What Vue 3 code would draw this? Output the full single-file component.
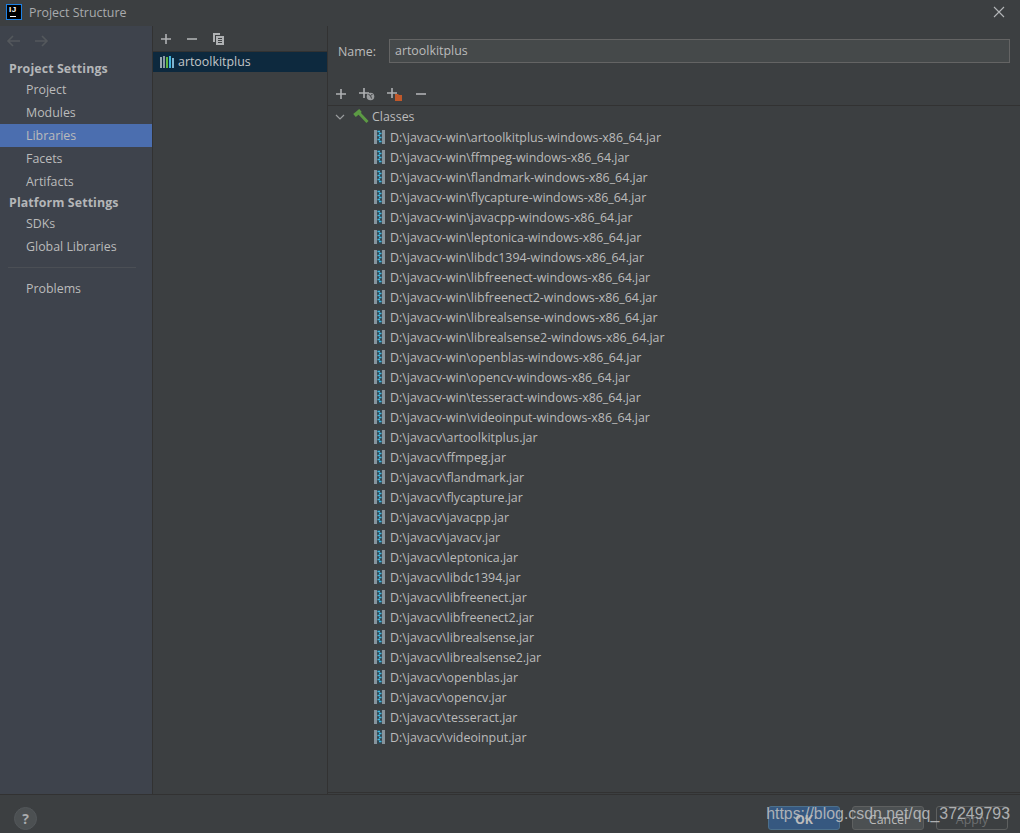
<template>
  <div class="dialog">
    <!-- Title bar -->
    <div class="title-bar">
      <div class="app-logo"><span class="logo-text">IJ</span><span class="logo-line"></span></div>
      <span class="title">Project Structure</span>
      <svg class="close" width="12" height="12" viewBox="0 0 12 12">
        <path d="M1 1l10 10M11 1L1 11" stroke="#b4b6b8" stroke-width="1.1" fill="none" />
      </svg>
    </div>

    <div class="body">
      <!-- Sidebar -->
      <aside class="sidebar">
        <div class="nav-arrows">
          <svg width="16" height="14" viewBox="0 0 16 14">
            <path d="M14 7H2M7 2L2 7l5 5" stroke="#54585c" stroke-width="1.6" fill="none" />
          </svg>
          <svg width="16" height="14" viewBox="0 0 16 14">
            <path d="M2 7h12M9 2l5 5-5 5" stroke="#54585c" stroke-width="1.6" fill="none" />
          </svg>
        </div>
        <div class="nav-head first">Project Settings</div>
        <div v-for="n in projectNav" :key="n" class="nav-item" :class="{ active: n === 'Libraries' }">{{ n }}</div>
        <div class="nav-head second">Platform Settings</div>
        <div v-for="n in platformNav" :key="n" class="nav-item">{{ n }}</div>
        <div class="nav-sep"></div>
        <div class="nav-item">Problems</div>
      </aside>

      <!-- Library list -->
      <section class="lib-panel">
        <div class="lib-toolbar">
          <svg width="12" height="12" viewBox="0 0 12 12"><path d="M6 1v10M1 6h10" stroke="#afb1b3" stroke-width="1.6" /></svg>
          <svg width="12" height="12" viewBox="0 0 12 12"><path d="M1 6h10" stroke="#afb1b3" stroke-width="1.6" /></svg>
          <svg width="13" height="13" viewBox="0 0 13 13">
            <path d="M1 1h7v2H3v7H1z" fill="#afb1b3" />
            <path d="M4 4h8v9H4z" fill="#afb1b3" />
            <path d="M6 6.500h4M6 8.500h4M6 10.500h4" stroke="#3c3f41" stroke-width="1" />
          </svg>
        </div>
        <div class="lib-row">
          <svg width="15" height="12" viewBox="0 0 15 12">
            <rect x="0" y="1" width="2" height="11" fill="#9aa7b0" />
            <rect x="3" y="0" width="2" height="12" fill="#8a9ba6" />
            <rect x="6" y="1" width="2" height="11" fill="#62b543" />
            <rect x="9" y="0" width="2" height="12" fill="#40b6e0" />
            <rect x="12" y="2" width="2" height="10" fill="#7fb4cf" />
          </svg>
          <span>artoolkitplus</span>
        </div>
      </section>

      <!-- Library detail -->
      <section class="detail">
        <div class="name-row">
          <label>Name:</label>
          <div class="name-input">artoolkitplus</div>
        </div>
        <div class="detail-toolbar">
          <svg width="12" height="12" viewBox="0 0 12 12"><path d="M6 1v10M1 6h10" stroke="#afb1b3" stroke-width="1.6" /></svg>
          <svg width="16" height="14" viewBox="0 0 16 14">
            <path d="M5 1v10M0 6h10" stroke="#afb1b3" stroke-width="1.6" />
            <circle cx="11.500" cy="9.500" r="3.800" fill="#9a9c9e" />
            <path d="M9.500 7.500l2 1 1 3M13.500 7.500l-1.500 .5" stroke="#3c3f41" stroke-width="1" fill="none" />
          </svg>
          <svg width="16" height="14" viewBox="0 0 16 14">
            <path d="M5 1v10M0 6h10" stroke="#afb1b3" stroke-width="1.6" />
            <path d="M8 7h3l1 1h3v6H8z" fill="#c0582a" />
          </svg>
          <svg width="12" height="12" viewBox="0 0 12 12"><path d="M1 6h10" stroke="#afb1b3" stroke-width="1.6" /></svg>
        </div>
        <div class="tree">
          <div class="tree-root">
            <svg class="chev" width="10" height="6" viewBox="0 0 10 6"><path d="M1 1l4 4 4-4" stroke="#9a9c9e" stroke-width="1.2" fill="none" /></svg>
            <svg width="16" height="15" viewBox="0 0 16 15">
              <path d="M1.500 6.500L7.500 1.500" stroke="#5c9a44" stroke-width="4" fill="none" />
              <path d="M5.500 3.500L14.500 13" stroke="#5c9a44" stroke-width="3" fill="none" />
            </svg>
            <span>Classes</span>
          </div>
          <div v-for="jar in jars" :key="jar" class="tree-row">
            <svg width="11" height="14" viewBox="0 0 11 14">
              <rect x="0" y="0" width="11" height="14" fill="#87939b" />
              <rect x="3" y="0" width="5" height="14" fill="#33454f" />
              <path d="M3.500 1.500h2.500M5 3.500h2.500M3.500 5.500h2.500M5 7.500h2.500M3.500 9.500h2.500M5 11.500h2.500" stroke="#40b6e0" stroke-width="1.500" />
            </svg>
            <span>{{ jar }}</span>
          </div>
        </div>
      </section>
    </div>

    <!-- Footer -->
    <footer class="footer">
      <div class="help">?</div>
      <div class="buttons">
        <div class="btn primary">OK</div>
        <div class="btn">Cancel</div>
        <div class="btn disabled">Apply</div>
      </div>
    </footer>

    <div class="watermark">https://blog.csdn.net/qq_37249793</div>
  </div>
</template>

<script setup>
const projectNav = ['Project', 'Modules', 'Libraries', 'Facets', 'Artifacts']
const platformNav = ['SDKs', 'Global Libraries']

const suffixes = ['artoolkitplus', 'ffmpeg', 'flandmark', 'flycapture', 'javacpp', 'leptonica', 'libdc1394', 'libfreenect', 'libfreenect2', 'librealsense', 'librealsense2', 'openblas', 'opencv', 'tesseract', 'videoinput']
const plain = ['artoolkitplus', 'ffmpeg', 'flandmark', 'flycapture', 'javacpp', 'javacv', 'leptonica', 'libdc1394', 'libfreenect', 'libfreenect2', 'librealsense', 'librealsense2', 'openblas', 'opencv', 'tesseract', 'videoinput']

const jars = [
  ...suffixes.map((s) => `D:\\javacv-win\\${s}-windows-x86_64.jar`),
  ...plain.map((s) => `D:\\javacv\\${s}.jar`)
]
</script>

<style>
html, body {
  margin: 0;
  background: #3c3f41;
}
</style>

<style scoped>
.dialog {
  position: relative;
  width: 1020px;
  height: 833px;
  display: flex;
  flex-direction: column;
  overflow: hidden;
  background: #3c3f41;
  color: #bbbbbb;
  font-family: "Open Sans", "Noto Sans", sans-serif;
  font-size: 12.4px;
}

.title-bar {
  height: 26px;
  box-sizing: border-box;
  flex: none;
  display: flex;
  align-items: center;
  padding: 0 0 2px 6px;
  background: #3c3f41;
}

.app-logo {
  position: relative;
  width: 16px;
  height: 16px;
  box-sizing: border-box;
  background: #000;
  border: 1px solid #1e82e6;
  color: #fff;
  font: bold 8px/9px "Liberation Sans", sans-serif;
  padding-left: 2px;
}

.logo-text {
  display: block;
  letter-spacing: 0.5px;
}

.logo-line {
  position: absolute;
  left: 3px;
  bottom: 2px;
  width: 6px;
  height: 1px;
  background: #fff;
}

.title {
  margin-left: 7px;
  font-size: 12.4px;
  color: #a9abad;
}

.close {
  margin-left: auto;
  margin-right: 15px;
}

.body {
  flex: 1;
  min-height: 0;
  display: flex;
  border-bottom: 1px solid #323232;
}

.sidebar {
  width: 152px;
  flex: none;
  background: #3e434c;
  border-right: 1px solid #323232;
}

.nav-arrows {
  height: 26px;
  display: flex;
  align-items: center;
  gap: 11px;
  padding-left: 6px;
  margin-top: 2px;
}

.nav-head {
  height: 20px;
  line-height: 20px;
  padding-left: 9px;
  font-weight: 700;
  color: #b4b6b8;
  letter-spacing: 0.1px;
}

.nav-head.first {
  margin-top: 5px;
  margin-bottom: -1px;
}

.nav-head.second {
  margin-bottom: -1px;
}

.nav-item {
  height: 23px;
  line-height: 23px;
  padding-left: 26px;
}

.nav-item.active {
  background: #4b6eaf;
}

.nav-sep {
  height: 1px;
  margin: 9px 16px 9px 8px;
  background: #4b4f55;
}

.lib-panel {
  width: 174px;
  flex: none;
  background: #3c3f41;
  border-right: 1px solid #323232;
}

.lib-toolbar {
  height: 25px;
  display: flex;
  align-items: center;
  gap: 14px;
  padding-left: 7px;
  border-bottom: 1px solid #323232;
}

.lib-row {
  height: 20px;
  display: flex;
  align-items: center;
  gap: 3px;
  padding-left: 7px;
  background: #0d293e;
  color: #c4c6c8;
}

.lib-row span {
  position: relative;
  top: -1px;
}

.detail {
  flex: 1;
  min-width: 0;
  display: flex;
  flex-direction: column;
  background: #3c3f41;
}

.name-row {
  display: flex;
  align-items: center;
  height: 24px;
  margin-top: 13px;
  padding: 0 10px;
}

.name-row label {
  width: 51px;
  flex: none;
}

.name-input {
  flex: 1;
  height: 22px;
  line-height: 22px;
  padding-left: 5px;
  background: #45494a;
  border: 1px solid #646464;
}

.detail-toolbar {
  height: 23px;
  margin-top: 18px;
  padding: 1px 0 0 7px;
  display: flex;
  align-items: center;
  gap: 12px;
  border-bottom: 1px solid #323232;
}

.tree {
  flex: 1;
  margin-bottom: 1px;
  border-bottom: 1px solid #323232;
}

.tree-root {
  height: 21px;
  display: flex;
  align-items: center;
  padding-left: 7px;
}

.chev {
  margin-right: 8px;
}

.tree-root span {
  margin-left: 3px;
}

.tree-row {
  height: 20px;
  display: flex;
  align-items: center;
  gap: 5px;
  padding-left: 46px;
}

.footer {
  height: 38px;
  box-sizing: border-box;
  flex: none;
  display: flex;
  align-items: center;
  padding: 8px 12px 0 14px;
}

.help {
  width: 23px;
  height: 23px;
  border-radius: 50%;
  background: #4c5052;
  border: 1px solid #53575a;
  box-sizing: border-box;
  text-align: center;
  line-height: 21px;
  font-weight: 700;
  font-size: 14px;
  color: #a9abad;
}

.buttons {
  margin-left: auto;
  display: flex;
  gap: 12px;
}

.btn {
  width: 72px;
  height: 24px;
  box-sizing: border-box;
  border: 1px solid #5e6060;
  border-radius: 3px;
  background: #4c5052;
  text-align: center;
  line-height: 25px;
  color: #bbbbbb;
}

.btn.primary {
  background: #365880;
  border-color: #4c708c;
  font-weight: 700;
}

.btn.disabled {
  background: transparent;
  color: #6c6e70;
}

.watermark {
  position: absolute;
  right: 10px;
  bottom: 10px;
  font-family: "Liberation Sans", Arial, sans-serif;
  font-size: 15.9px;
  color: #b9bbbd;
  opacity: 0.9;
  white-space: nowrap;
}
</style>
